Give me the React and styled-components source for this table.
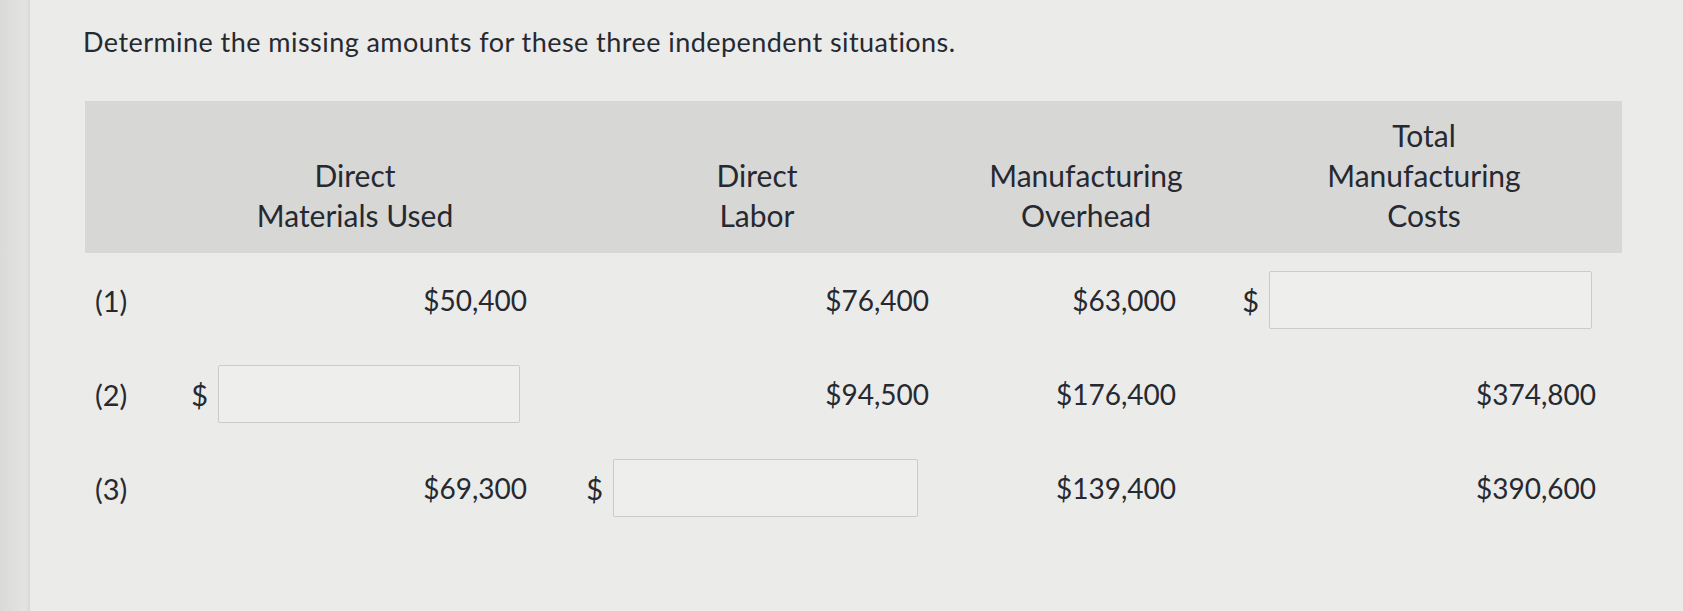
import React from 'react';
import styled, { createGlobalStyle } from 'styled-components';

const GlobalStyle = createGlobalStyle`
  html, body {
    margin: 0;
    padding: 0;
    background: #ebebea;
  }
  body {
    font-family: Lato, "Open Sans", sans-serif;
    color: #262930;
  }
`;

const Page = styled.div`
  display: flex;
  width: 1683px;
  height: 611px;
  overflow: hidden;
  background: #ebebea;
`;

const EdgeStrip = styled.div`
  width: 30px;
  flex-shrink: 0;
  background: linear-gradient(90deg, #dadad9 0%, #e3e3e2 85%, #d8d8d7 100%);
`;

const Main = styled.div`
  flex: 1;
  padding: 26px 0 0 53px;
`;

const Title = styled.h1`
  margin: 0;
  font-size: 27px;
  line-height: 32px;
  font-weight: 400;
  letter-spacing: 0.45px;
`;

const Table = styled.div`
  width: 1537px;
  margin: 43px 0 0 2px;
`;

const HeaderBand = styled.div`
  display: grid;
  grid-template-columns: 84px 372px 432px 226px 28px 394px;
  align-items: end;
  height: 152px;
  box-sizing: border-box;
  padding: 14px 0 18px;
  background: #d7d7d6;
`;

const HeaderCell = styled.div`
  text-align: center;
  font-size: 30px;
  line-height: 40px;
  font-weight: 400;
`;

const Row = styled.div`
  display: grid;
  grid-template-columns: 94px 360px 402px 247px 420px;
  align-items: center;
  height: 94px;
  padding-right: 14px;
`;

const Label = styled.div`
  padding-left: 10px;
  font-size: 29px;
`;

const Cell = styled.div`
  display: flex;
  justify-content: flex-end;
  align-items: center;
  gap: 10px;
  padding-right: 12px;
  font-size: 28px;
`;

const Dollar = styled.span`
  font-size: 29px;
`;

const AnswerBox = styled.div`
  width: ${(p) => p.$w}px;
  height: 58px;
  margin-right: ${(p) => p.$mr}px;
  box-sizing: border-box;
  border: 1.5px solid #cbcbca;
  border-radius: 2px;
  background: #eeeeed;
`;

const Blank = ({ w, mr }) => (
  <>
    <Dollar>$</Dollar>
    <AnswerBox $w={w} $mr={mr} />
  </>
);

const rows = [
  { n: '(1)', dm: '$50,400', dl: '$76,400', mo: '$63,000', tmc: null },
  { n: '(2)', dm: null, dl: '$94,500', mo: '$176,400', tmc: '$374,800' },
  { n: '(3)', dm: '$69,300', dl: null, mo: '$139,400', tmc: '$390,600' },
];

export default function App() {
  return (
    <Page>
      <GlobalStyle />
      <EdgeStrip />
      <Main>
        <Title>Determine the missing amounts for these three independent situations.</Title>
        <Table>
          <HeaderBand>
            <div />
            <HeaderCell>Direct<br />Materials Used</HeaderCell>
            <HeaderCell>Direct<br />Labor</HeaderCell>
            <HeaderCell>Manufacturing<br />Overhead</HeaderCell>
            <div />
            <HeaderCell>Total<br />Manufacturing<br />Costs</HeaderCell>
          </HeaderBand>
          {rows.map((r) => (
            <Row key={r.n}>
              <Label>{r.n}</Label>
              <Cell>{r.dm ?? <Blank w={302} mr={7} />}</Cell>
              <Cell>{r.dl ?? <Blank w={305} mr={11} />}</Cell>
              <Cell>{r.mo}</Cell>
              <Cell>{r.tmc ?? <Blank w={323} mr={4} />}</Cell>
            </Row>
          ))}
        </Table>
      </Main>
    </Page>
  );
}
